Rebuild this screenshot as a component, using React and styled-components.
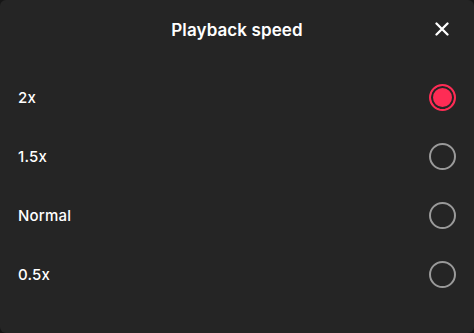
import React, { useState } from 'react';
import styled, { createGlobalStyle } from 'styled-components';

const GlobalStyle = createGlobalStyle`
  html, body {
    margin: 0;
    padding: 0;
    background: #161616;
  }
  #root {
    width: 474px;
    height: 333px;
  }
`;

const Sheet = styled.div`
  width: 474px;
  height: 333px;
  box-sizing: border-box;
  background: #252525;
  border-radius: 6px;
  color: #fff;
  font-family: Inter, "Noto Sans", sans-serif;
  display: flex;
  flex-direction: column;
`;

const Header = styled.div`
  height: 60px;
  display: flex;
  align-items: center;
  justify-content: center;
  position: relative;
`;

const Title = styled.h2`
  margin: 0;
  font-size: 17px;
  font-weight: 600;
  letter-spacing: 0.1px;
`;

const CloseButton = styled.button`
  position: absolute;
  right: 25px;
  top: 22px;
  width: 14px;
  height: 14px;
  padding: 0;
  border: 0;
  background: none;
  cursor: pointer;
  display: flex;
  align-items: center;
  justify-content: center;
`;

const List = styled.div`
  display: flex;
  flex-direction: column;
  padding-top: 8px;
`;

const Row = styled.label`
  height: 59px;
  display: flex;
  align-items: center;
  justify-content: space-between;
  padding: 0 18px;
  cursor: pointer;
`;

const Label = styled.span`
  font-size: 15px;
  font-weight: 500;
  letter-spacing: 0.2px;
  color: #fff;
`;

const Radio = styled.span`
  width: 27px;
  height: 27px;
  box-sizing: border-box;
  border-radius: 50%;
  border: 2px solid ${props => (props.checked ? '#fe2c55' : '#9a9a9a')};
  background: ${props => (props.checked ? '#fe2c55' : 'transparent')};
  box-shadow: ${props => (props.checked ? 'inset 0 0 0 2px #252525' : 'none')};
  display: block;
`;

const speeds = ['2x', '1.5x', 'Normal', '0.5x'];

const App = () => {
  const [speed, setSpeed] = useState('2x');
  return (
    <>
      <GlobalStyle />
      <Sheet>
        <Header>
          <Title>Playback speed</Title>
          <CloseButton aria-label="Close">
            <svg width="14" height="14" viewBox="0 0 14 14">
              <path d="M1.5 1.5 L12.5 12.5 M12.5 1.5 L1.5 12.5" stroke="#fff" strokeWidth="2.3" strokeLinecap="round" />
            </svg>
          </CloseButton>
        </Header>
        <List>
          {speeds.map(s => (
            <Row key={s} onClick={() => setSpeed(s)}>
              <Label>{s}</Label>
              <Radio checked={speed === s} />
            </Row>
          ))}
        </List>
      </Sheet>
    </>
  );
};

export default App;
